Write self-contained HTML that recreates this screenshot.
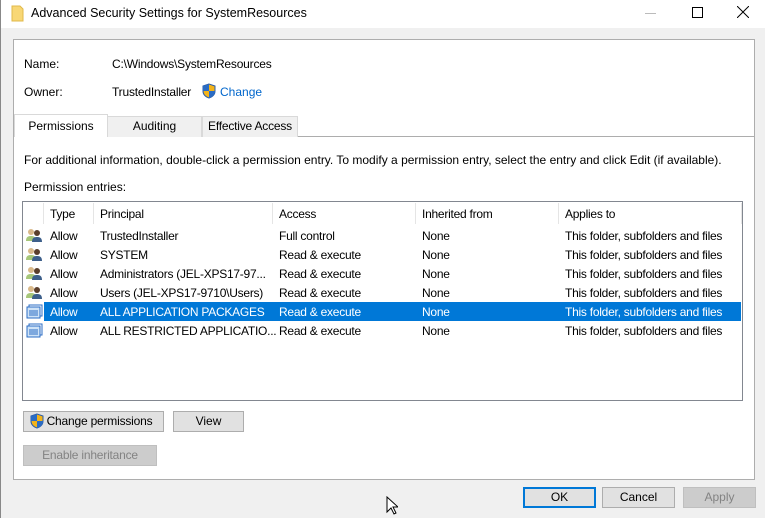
<!DOCTYPE html>
<html><head><style>
*{margin:0;padding:0;box-sizing:border-box}
body{width:765px;height:518px;background:#f0f0f0;font-family:"Liberation Sans",sans-serif;font-size:12px;color:#000;position:relative;overflow:hidden}
.a{position:absolute;white-space:nowrap}
.btn{position:absolute;background:#e1e1e1;border:1px solid #adadad;text-align:center;line-height:19px;height:21px}
.row{position:absolute;left:23px;width:718px;height:19px;letter-spacing:-0.25px}
.row span{position:absolute;top:3px;white-space:nowrap}
.sel{background:#0078d7;color:#fff}
</style></head><body>
<div class="a" style="left:0;top:0;width:765px;height:28px;background:#fff"></div>
<div class="a" style="left:0;top:0;width:1px;height:518px;background:#888"></div>
<svg class="a" style="left:11px;top:5px" width="14" height="17"><path d="M1 1h8l3 3v12H1z" fill="#f8d775" stroke="#e0b94a"/></svg>
<div class="a" style="left:31px;top:6px;font-size:12.5px">Advanced Security Settings for SystemResources</div>
<div class="a" style="left:645px;top:13px;width:11px;height:1px;background:#bbb"></div>
<div class="a" style="left:692px;top:7px;width:11px;height:11px;border:1px solid #000"></div>
<svg class="a" style="left:737px;top:6px" width="12" height="12"><path d="M0 0L12 12M12 0L0 12" stroke="#000"/></svg>
<div class="a" style="left:13px;top:39px;width:742px;height:441px;background:#fff;border:1px solid #adadad"></div>
<div class="a" style="left:24px;top:57px">Name:</div>
<div class="a" style="left:112px;top:57px;letter-spacing:-0.2px">C:\Windows\SystemResources</div>
<div class="a" style="left:24px;top:85px">Owner:</div>
<div class="a" style="left:112px;top:85px;letter-spacing:-0.2px">TrustedInstaller</div>
<svg class="a" style="left:202px;top:83px" width="14" height="16"><path d="M7 1L1 3v5c0 4 3 6 6 7 3-1 6-3 6-7V3z" fill="#f3b319" stroke="#2a5ca8"/><path d="M7 1v7H1V3zM7 8h6c0 4-3 6-6 7z" fill="#2b6cc4"/></svg>
<div class="a" style="left:220px;top:85px;color:#0066cc">Change</div>
<div class="a" style="left:14px;top:136px;width:740px;height:1px;background:#adadad"></div>
<div class="a" style="left:107px;top:116px;width:95px;height:21px;background:#f0f0f0;border:1px solid #d9d9d9;border-bottom:none;text-align:center;line-height:19px">Auditing</div>
<div class="a" style="left:202px;top:116px;width:96px;height:21px;background:#f0f0f0;border:1px solid #d9d9d9;border-bottom:none;text-align:center;line-height:19px;letter-spacing:-0.2px">Effective Access</div>
<div class="a" style="left:14px;top:114px;width:94px;height:23px;background:#fff;border:1px solid #d9d9d9;border-bottom:none;text-align:center;line-height:23px">Permissions</div>
<div class="a" style="left:24px;top:153px">For additional information, double-click a permission entry. To modify a permission entry, select the entry and click Edit (if available).</div>
<div class="a" style="left:24px;top:180px">Permission entries:</div>
<div class="a" style="left:22px;top:201px;width:721px;height:200px;border:1px solid #828790;background:#fff"></div>
<div class="row" style="top:204px;color:#000"><span style="left:27px">Type</span><span style="left:77px">Principal</span><span style="left:256px">Access</span><span style="left:399px">Inherited from</span><span style="left:542px">Applies to</span></div>
<div class="a" style="left:43px;top:203px;width:1px;height:21px;background:#e5e5e5"></div>
<div class="a" style="left:93px;top:203px;width:1px;height:21px;background:#e5e5e5"></div>
<div class="a" style="left:272px;top:203px;width:1px;height:21px;background:#e5e5e5"></div>
<div class="a" style="left:415px;top:203px;width:1px;height:21px;background:#e5e5e5"></div>
<div class="a" style="left:558px;top:203px;width:1px;height:21px;background:#e5e5e5"></div>
<div class="a" style="left:741px;top:203px;width:1px;height:21px;background:#e5e5e5"></div>

<div class="row" style="top:226px"><span style="left:27px">Allow</span><span style="left:77px">TrustedInstaller</span><span style="left:256px">Full control</span><span style="left:399px">None</span><span style="left:542px">This folder, subfolders and files</span></div>
<div class="row" style="top:245px"><span style="left:27px">Allow</span><span style="left:77px">SYSTEM</span><span style="left:256px">Read &amp; execute</span><span style="left:399px">None</span><span style="left:542px">This folder, subfolders and files</span></div>
<div class="row" style="top:264px"><span style="left:27px">Allow</span><span style="left:77px">Administrators (JEL-XPS17-97...</span><span style="left:256px">Read &amp; execute</span><span style="left:399px">None</span><span style="left:542px">This folder, subfolders and files</span></div>
<div class="row" style="top:283px"><span style="left:27px">Allow</span><span style="left:77px">Users (JEL-XPS17-9710\Users)</span><span style="left:256px">Read &amp; execute</span><span style="left:399px">None</span><span style="left:542px">This folder, subfolders and files</span></div>
<div class="a sel" style="left:44px;top:302px;width:697px;height:19px"></div>
<div class="row" style="top:302px;color:#fff"><span style="left:27px">Allow</span><span style="left:77px">ALL APPLICATION PACKAGES</span><span style="left:256px">Read &amp; execute</span><span style="left:399px">None</span><span style="left:542px">This folder, subfolders and files</span></div>
<div class="row" style="top:321px"><span style="left:27px">Allow</span><span style="left:77px">ALL RESTRICTED APPLICATIO...</span><span style="left:256px">Read &amp; execute</span><span style="left:399px">None</span><span style="left:542px">This folder, subfolders and files</span></div>

<svg class="a" style="left:26px;top:227px" width="17" height="90">
<g id="u"><circle cx="5" cy="5" r="3" fill="#d9b98a"/><path d="M0 14c0-4 2-5 5-5s5 1 5 5z" fill="#a7c77a"/><circle cx="11" cy="6" r="3" fill="#5a3e2b"/><path d="M6 15c0-4 2-5 5-5s5 1 5 5z" fill="#3d5f8a"/></g>
<use href="#u" y="19"/><use href="#u" y="38"/><use href="#u" y="57"/>
</svg>
<svg class="a" style="left:26px;top:304px" width="17" height="36">
<g id="p"><rect x="3" y="1" width="13" height="11" fill="#fff" stroke="#2b6cc4"/><rect x="1" y="3" width="13" height="11" fill="#cfe3f7" stroke="#2b6cc4"/><path d="M3 7h9M3 9h9M3 11h9" stroke="#2b6cc4"/></g>
<use href="#p" y="19"/>
</svg>

<div class="btn" style="left:23px;top:411px;width:141px;padding-left:12px;letter-spacing:-0.2px">Change permissions</div>
<svg class="a" style="left:30px;top:413px" width="14" height="16"><path d="M7 1L1 3v5c0 4 3 6 6 7 3-1 6-3 6-7V3z" fill="#f3b319" stroke="#2a5ca8"/><path d="M7 1v7H1V3zM7 8h6c0 4-3 6-6 7z" fill="#2b6cc4"/></svg>
<div class="btn" style="left:173px;top:411px;width:71px">View</div>
<div class="btn" style="left:23px;top:445px;width:134px;background:#cccccc;border-color:#bfbfbf;color:#838383;letter-spacing:-0.2px">Enable inheritance</div>
<div class="btn" style="left:523px;top:487px;width:73px;border:2px solid #0078d7;line-height:17px">OK</div>
<div class="btn" style="left:602px;top:487px;width:73px">Cancel</div>
<div class="btn" style="left:683px;top:487px;width:73px;background:#cccccc;border-color:#bfbfbf;color:#838383">Apply</div>
<svg class="a" style="left:386px;top:496px" width="12" height="20"><path d="M1 1v15l4-4 3 6 2-1-3-6h5z" fill="#fff" stroke="#000"/></svg>
</body></html>
